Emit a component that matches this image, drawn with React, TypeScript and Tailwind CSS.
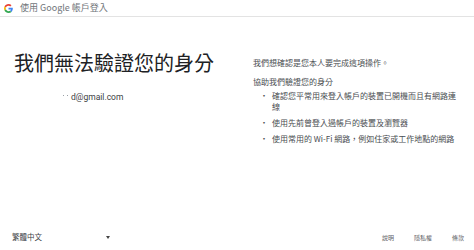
import React from 'react'

const cjk = { fontFamily: '"Noto Sans CJK TC", "Noto Sans", Roboto, sans-serif' }

function GLogo() {
    return (
        <svg width="9" height="9" viewBox="0 0 48 48">
            <path fill="#EA4335" d="M24 9.5c3.54 0 6.71 1.22 9.21 3.6l6.85-6.85C35.9 2.38 30.47 0 24 0 14.62 0 6.51 5.38 2.56 13.22l7.98 6.19C12.43 13.72 17.74 9.5 24 9.5z" />
            <path fill="#4285F4" d="M46.98 24.55c0-1.57-.15-3.09-.38-4.55H24v9.02h12.94c-.58 2.96-2.26 5.48-4.78 7.18l7.73 6c4.51-4.18 7.09-10.36 7.09-17.65z" />
            <path fill="#FBBC05" d="M10.53 28.59c-.48-1.45-.76-2.99-.76-4.59s.27-3.14.76-4.59l-7.98-6.19C.92 16.46 0 20.12 0 24c0 3.88.92 7.54 2.56 10.78l7.97-6.19z" />
            <path fill="#34A853" d="M24 48c6.48 0 11.93-2.13 15.89-5.81l-7.73-6c-2.15 1.45-4.92 2.3-8.16 2.3-6.26 0-11.57-4.22-13.47-9.91l-7.98 6.19C6.51 42.62 14.62 48 24 48z" />
        </svg>
    )
}

const tips = [
    '確認您平常用來登入帳戶的裝置已開機而且有網路連線',
    '使用先前曾登入過帳戶的裝置及瀏覽器',
    '使用常用的 Wi-Fi 網路，例如住家或工作地點的網路',
]

export default function App() {
    return (
        <div className="flex flex-col w-[474px] h-[250px] bg-white overflow-hidden" style={cjk}>
            <div className="flex items-center gap-[7px] h-[17px] pl-[4px] border-b border-[#e3e3e3]">
                <GLogo />
                <span className="text-[9px] leading-[12px] text-[#70757a]">使用 Google 帳戶登入</span>
            </div>
            <div className="flex flex-1">
                <div className="flex flex-col w-[253px] pl-[14px] pt-[34px]">
                    <h1 className="text-[20px] leading-[24px] text-[#202124] font-normal whitespace-nowrap">我們無法驗證您的身分</h1>
                    <div className="flex items-center ml-[49px] mt-[16px] text-[8.5px] leading-[12px] text-[#3c4043]">
                        <span className="flex gap-[3px] mr-[3px] -mt-[4px]">
                            <span className="w-[1px] h-[1px] bg-[#9aa0a6]"></span>
                            <span className="w-[1px] h-[1px] bg-[#9aa0a6]"></span>
                        </span>
                        <span style={{ fontFamily: 'Roboto, "Liberation Sans", sans-serif' }}>d@gmail.com</span>
                    </div>
                </div>
                <div className="flex flex-col pt-[40px] text-[8px] leading-[12px] text-[#4a4d51]">
                    <p>我們想確認是您本人要完成這項操作。</p>
                    <p className="mt-[7px]">協助我們驗證您的身分</p>
                    <ul className="flex flex-col gap-[5px] mt-[2px]">
                        {tips.map((t) => (
                            <li key={t} className="flex leading-[11px]">
                                <span className="w-[19px] pl-[7px] shrink-0">•</span>
                                <span className="w-[190px]">{t}</span>
                            </li>
                        ))}
                    </ul>
                </div>
            </div>
            <div className="flex items-center justify-between h-[24px] pl-[12px] pr-[10px] pb-[2px]">
                <div className="flex items-center w-[98px] justify-between">
                    <span className="text-[7.5px] text-[#3c4043]">繁體中文</span>
                    <span className="w-0 h-0 border-l-[2.5px] border-r-[2.5px] border-t-[3px] border-l-transparent border-r-transparent border-t-[#444]"></span>
                </div>
                <div className="flex items-center gap-[20px] text-[6px] text-[#5f6368]">
                    <span>說明</span>
                    <span>隱私權</span>
                    <span>條款</span>
                </div>
            </div>
        </div>
    )
}
